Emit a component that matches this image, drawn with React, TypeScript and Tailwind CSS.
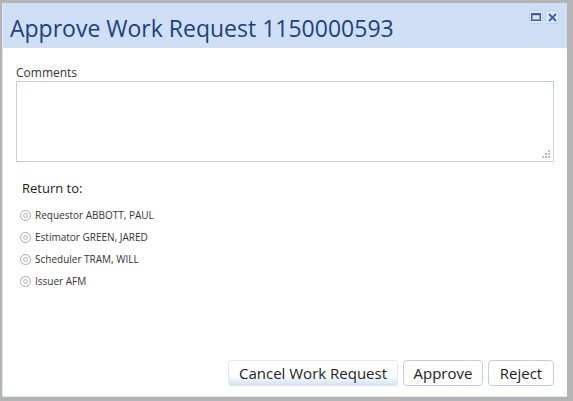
import React from 'react';

const recipients = [
    'Requestor ABBOTT, PAUL',
    'Estimator GREEN, JARED',
    'Scheduler TRAM, WILL',
    'Issuer AFM',
];

const App: React.FC = () => {
    return (
        <div
            className="w-[573px] h-[401px] bg-[#b4b4b4] pt-[3px] pl-[2px] pr-[6px] pb-[4px] overflow-hidden"
            style={{ fontFamily: '"Open Sans", "Noto Sans", sans-serif' }}
        >
            <div className="h-full flex flex-col bg-white border-l border-b border-[#dfe6f0]">
                {/* title bar */}
                <div className="h-[45px] shrink-0 bg-[#cfe0f6] flex items-start justify-between pl-[7px] pr-[8px]">
                    <h1 className="mt-[10px] text-[23px] leading-[30px] text-[#22407c]">
                        Approve Work Request 1150000593
                    </h1>
                    <div className="mt-[7px] flex gap-[2px]">
                        <button className="w-[14px] h-[14px] rounded-[3px] bg-[#dde9f8] border border-[#bfd1ea] flex items-center justify-center">
                            <svg width="10" height="8" viewBox="0 0 10 8">
                                <rect x="0.75" y="0.75" width="8.5" height="6.5" fill="none" stroke="#3a5fa8" strokeWidth="1.5" />
                                <rect x="0.75" y="0.75" width="8.5" height="1.5" fill="#3a5fa8" />
                            </svg>
                        </button>
                        <button className="w-[14px] h-[14px] rounded-[3px] bg-[#dde9f8] border border-[#bfd1ea] flex items-center justify-center">
                            <svg width="9" height="9" viewBox="0 0 9 9">
                                <path d="M1 1 L8 8 M8 1 L1 8" stroke="#3a5fa8" strokeWidth="1.8" />
                            </svg>
                        </button>
                    </div>
                </div>

                {/* body */}
                <div className="flex-1 flex flex-col px-[13px]">
                    <label className="mt-[17px] text-[12px] leading-[16px] text-[#333]">Comments</label>
                    <div className="relative">
                        <textarea className="block w-[538px] h-[81px] border border-[#c9cede] resize-none outline-none" />
                        <svg className="absolute right-[3px] bottom-[3px]" width="10" height="10" viewBox="0 0 10 10">
                            <circle cx="8" cy="2" r="1" fill="#aaa" />
                            <circle cx="5" cy="5" r="1" fill="#aaa" />
                            <circle cx="8" cy="5" r="1" fill="#aaa" />
                            <circle cx="2" cy="8" r="1" fill="#aaa" />
                            <circle cx="5" cy="8" r="1" fill="#aaa" />
                            <circle cx="8" cy="8" r="1" fill="#aaa" />
                        </svg>
                    </div>

                    <div className="mt-[17px] pl-[6px] text-[13px] leading-[18px] text-[#222]">Return to:</div>

                    <div className="mt-[10px] flex flex-col gap-[6px] pl-[4px]">
                        {recipients.map(r => (
                            <label key={r} className="flex items-center gap-[4px] h-[16px] text-[10px] text-[#333]">
                                <span className="w-[11px] h-[11px] rounded-full border border-[#a9a9a9] bg-white flex items-center justify-center">
                                    <span className="w-[5px] h-[5px] rounded-full border border-[#b5b5b5]" />
                                </span>
                                {r}
                            </label>
                        ))}
                    </div>

                    <div className="mt-auto mb-[10px] flex justify-end gap-[5px]">
                        <button className="h-[26px] w-[170px] rounded-[3px] border border-[#e2e6ee] bg-gradient-to-b from-white from-60% to-[#d3e3f5] text-[15px] text-[#222]">
                            Cancel Work Request
                        </button>
                        <button className="h-[26px] w-[80px] rounded-[4px] border border-[#c8ccd6] bg-white text-[15px] text-[#222]">
                            Approve
                        </button>
                        <button className="h-[26px] w-[66px] rounded-[4px] border border-[#c8ccd6] bg-white text-[15px] text-[#222]">
                            Reject
                        </button>
                    </div>
                </div>
            </div>
        </div>
    );
};

export default App;
